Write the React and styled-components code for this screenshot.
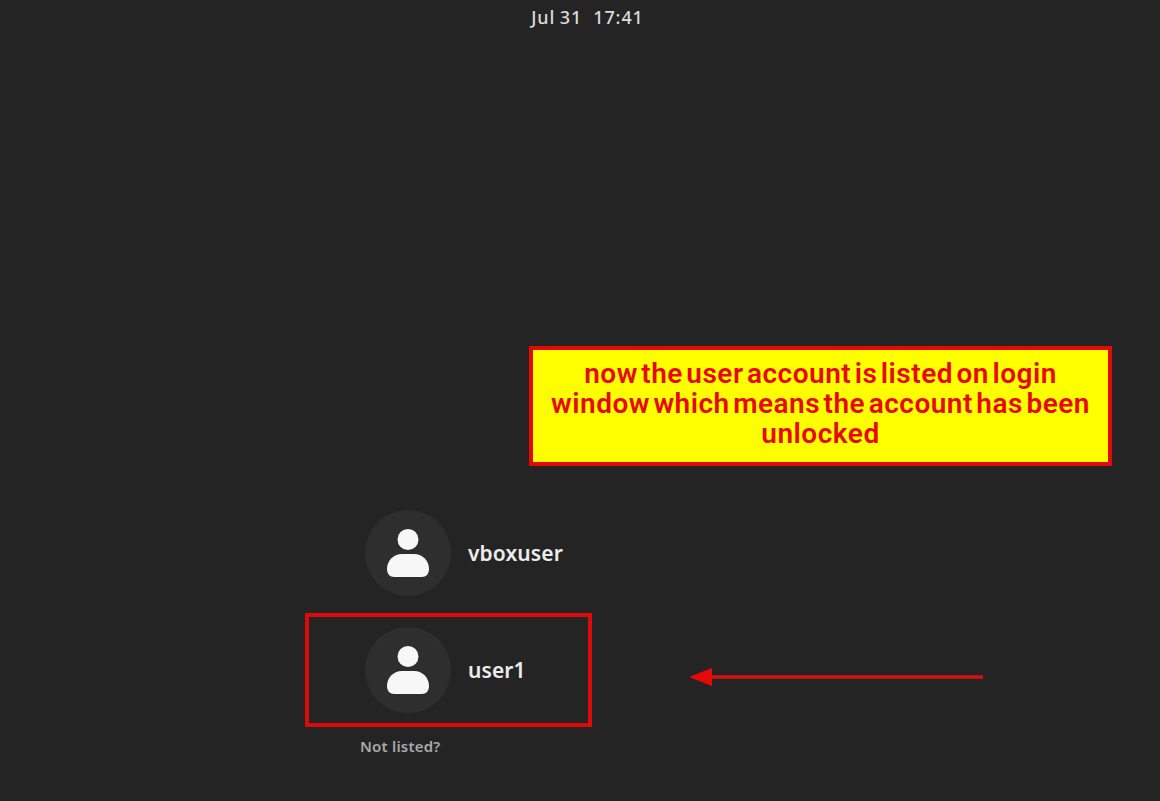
import React from 'react';
import styled, { createGlobalStyle } from 'styled-components';

const GlobalStyle = createGlobalStyle`
    html, body {
        margin: 0;
        padding: 0;
        background: #242424;
    }
`;

const users = [
    { name: 'vboxuser' },
    { name: 'user1', marked: true },
];

const UserIcon = () => (
    <svg width="42" height="48" viewBox="0 0 42 48" fill="#f7f7f7">
        <circle cx="21" cy="10.5" r="10.5" />
        <path d="M15 25h12c9 0 15 7 15 15 0 5-3 8-7 8H7c-4 0-7-3-7-8 0-8 6-15 15-15z" />
    </svg>
);

const App = () => {
    return (
        <Screen>
            <GlobalStyle />
            <Clock>
                <span>Jul 31</span>
                <span>17:41</span>
            </Clock>
            <Callout>
                now the user account is listed on login window which means the
                account has been unlocked
            </Callout>
            <UserList>
                {users.map((user) => (
                    <UserRow key={user.name} $marked={user.marked}>
                        <Avatar>
                            <UserIcon />
                        </Avatar>
                        <UserName>{user.name}</UserName>
                    </UserRow>
                ))}
                <NotListed>Not listed?</NotListed>
            </UserList>
            <Arrow width="296" height="20" viewBox="0 0 296 20">
                <path d="M22 8.2h272v3.6H22z" fill="#d80f0f" />
                <path d="M0 10 23 1v18z" fill="#e80808" />
            </Arrow>
        </Screen>
    );
};

const Screen = styled.div`
    position: relative;
    width: 1160px;
    height: 801px;
    overflow: hidden;
    display: flex;
    flex-direction: column;
    background: #242424;
    font-family: 'Noto Sans', sans-serif;
`;
const Clock = styled.div`
    display: flex;
    justify-content: center;
    gap: 11px;
    height: 34px;
    margin-left: 15px;
    padding-top: 5px;
    box-sizing: border-box;
    font-size: 18px;
    line-height: 24px;
    font-weight: 500;
    letter-spacing: 0.9px;
    word-spacing: -1px;
    color: #dcdcdc;
`;
const Callout = styled.div`
    position: absolute;
    left: 529px;
    top: 346px;
    width: 583px;
    height: 120px;
    box-sizing: border-box;
    padding: 9px 14px 0;
    border: 4px solid #e40808;
    background: #ffff00;
    text-align: center;
    font-family: 'Roboto', sans-serif;
    font-size: 28px;
    line-height: 30px;
    font-weight: 600;
    letter-spacing: 0.5px;
    word-spacing: -4px;
    color: #e80808;
`;
const UserList = styled.div`
    display: flex;
    flex-direction: column;
    align-items: flex-start;
    gap: 3px;
    margin: 462px 0 0 305px;
`;
const UserRow = styled.div`
    display: flex;
    align-items: center;
    gap: 17px;
    width: 287px;
    height: 114px;
    box-sizing: border-box;
    padding-left: 56px;
    border: 4px solid ${({ $marked }) => ($marked ? '#dc0a0a' : 'transparent')};
`;
const Avatar = styled.div`
    display: flex;
    align-items: center;
    justify-content: center;
    flex-shrink: 0;
    width: 86px;
    height: 86px;
    border-radius: 50%;
    background: #2e2e2e;
`;
const UserName = styled.div`
    font-size: 21px;
    line-height: 26px;
    font-weight: 600;
    letter-spacing: 0.1px;
    color: #ececec;
`;
const NotListed = styled.div`
    margin: 7px 0 0 55px;
    font-size: 15px;
    line-height: 18px;
    font-weight: 600;
    letter-spacing: 0.2px;
    color: #a8a8a8;
`;
const Arrow = styled.svg`
    position: absolute;
    left: 689px;
    top: 667px;
`;

export default App;
